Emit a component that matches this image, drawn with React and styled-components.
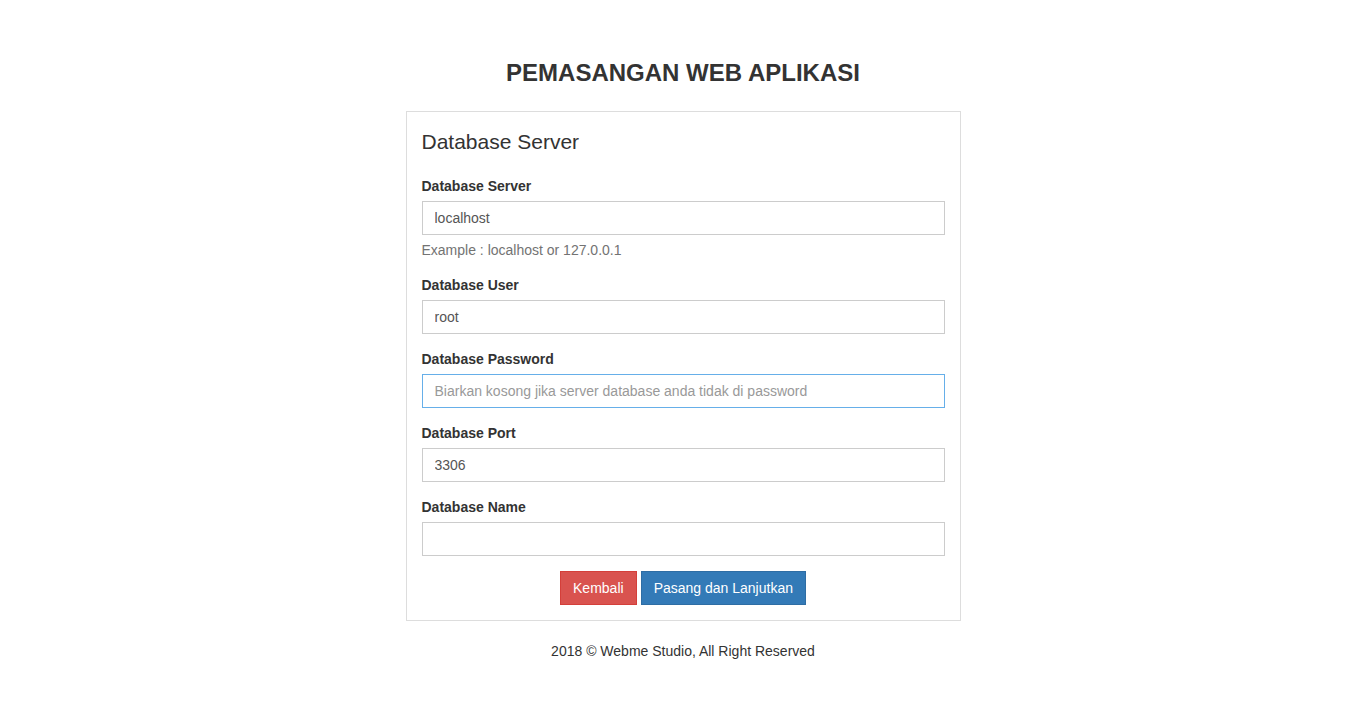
import styled, { createGlobalStyle } from "styled-components";

const GlobalStyle = createGlobalStyle`
    * { box-sizing: border-box; }
    body {
        margin: 0;
        background: #fff;
        font-family: "Liberation Sans", Arial, sans-serif;
        font-size: 14px;
        line-height: 1.42857143;
        color: #333;
    }
`;

const Page = styled.div`
    width: 555px;
    margin: 0 auto;
    padding-top: 60px;
`;

const Title = styled.h3`
    margin: 0 0 25px;
    font-size: 24px;
    font-weight: bold;
    line-height: 26px;
    text-align: center;
    color: #333;
`;

const Card = styled.form`
    border: 1px solid #ddd;
    padding: 15px;
`;

const Legend = styled.div`
    font-size: 21px;
    line-height: 30px;
    color: #333;
    margin-bottom: 19px;
`;

const Group = styled.div`
    margin-bottom: 15px;
`;

const Label = styled.label`
    display: block;
    font-weight: bold;
    margin-bottom: 5px;
    line-height: 20px;
`;

const Input = styled.input`
    display: block;
    width: 100%;
    height: 34px;
    padding: 6px 12px;
    font-family: inherit;
    font-size: 14px;
    color: #555;
    background: #fff;
    border: 1px solid ${(p) => (p.$focus ? "#66afe9" : "#ccc")};
    border-radius: 0;
    outline: none;
    &::placeholder { color: #999; }
`;

const Help = styled.div`
    margin-top: 5px;
    color: #737373;
    line-height: 20px;
`;

const Actions = styled.div`
    display: flex;
    justify-content: center;
    gap: 4px;
`;

const Button = styled.button`
    height: 34px;
    padding: 6px 12px;
    font-family: inherit;
    font-size: 14px;
    line-height: 20px;
    color: #fff;
    border-radius: 0;
    border: 1px solid ${(p) => (p.$danger ? "#d43f3a" : "#2e6da4")};
    background: ${(p) => (p.$danger ? "#d9534f" : "#337ab7")};
    cursor: pointer;
`;

const Footer = styled.div`
    text-align: center;
    margin-top: 20px;
    line-height: 20px;
    color: #333;
`;

const App = () => {
  return (
    <>
      <GlobalStyle />
      <Page>
        <Title>PEMASANGAN WEB APLIKASI</Title>
        <Card onSubmit={(e) => e.preventDefault()}>
          <Legend>Database Server</Legend>
          <Group>
            <Label>Database Server</Label>
            <Input defaultValue="localhost" />
            <Help>Example : localhost or 127.0.0.1</Help>
          </Group>
          <Group>
            <Label>Database User</Label>
            <Input defaultValue="root" />
          </Group>
          <Group>
            <Label>Database Password</Label>
            <Input $focus type="password" placeholder="Biarkan kosong jika server database anda tidak di password" />
          </Group>
          <Group>
            <Label>Database Port</Label>
            <Input defaultValue="3306" />
          </Group>
          <Group>
            <Label>Database Name</Label>
            <Input />
          </Group>
          <Actions>
            <Button $danger type="button">Kembali</Button>
            <Button type="submit">Pasang dan Lanjutkan</Button>
          </Actions>
        </Card>
        <Footer>2018 © Webme Studio, All Right Reserved</Footer>
      </Page>
    </>
  )
}

export default App
